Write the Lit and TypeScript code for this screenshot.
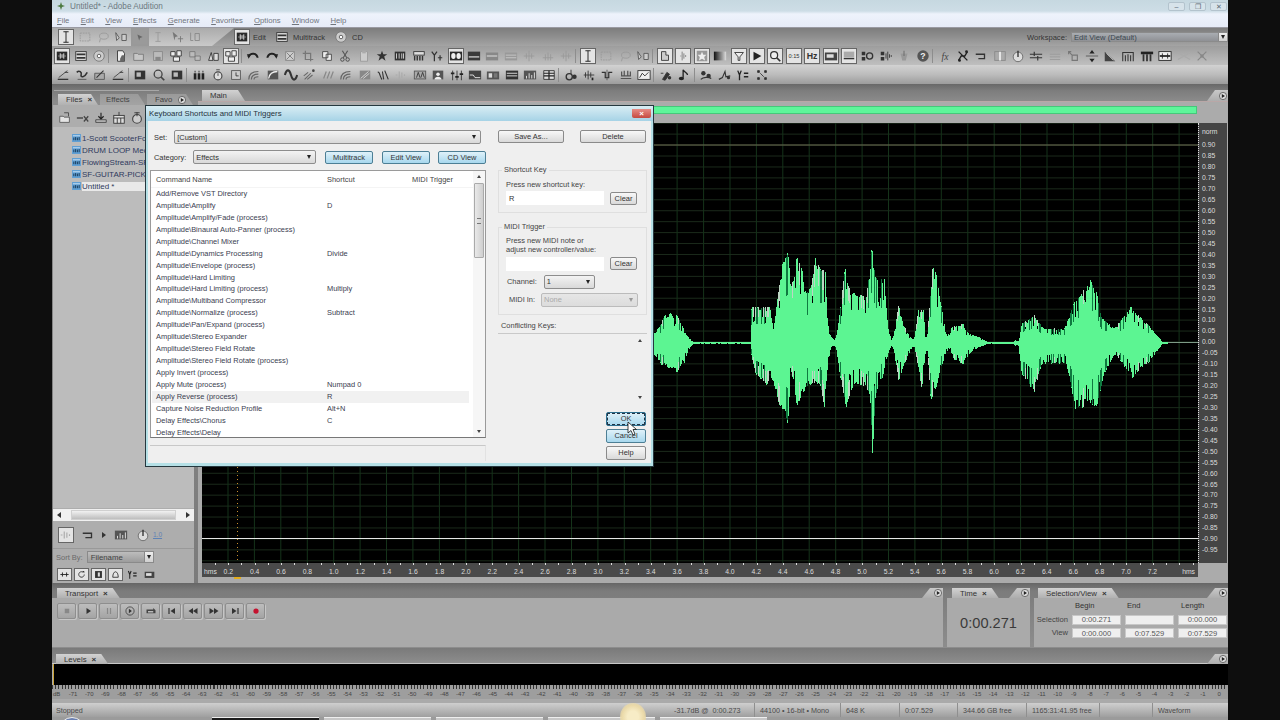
import { LitElement, html, css, svg, TemplateResult } from "lit";
import { customElement } from "lit/decorators.js";

/* ---------- toolbar glyphs ---------- */
const G: Record<string, TemplateResult> = {
  wave: svg`<rect x="2" y="3" width="12" height="10" fill="#2a2a2a"/><path d="M4 8h1M6 5v6M8 6v4M10 5v6M12 8h-1" stroke="#fff"/>`,
  mt: svg`<rect x="2" y="3" width="12" height="10" fill="#ddd" stroke="#333"/><path d="M3 6h10M3 10h10" stroke="#333" stroke-width="2"/>`,
  cd: svg`<circle cx="8" cy="8" r="6" fill="#ccc" stroke="#777"/><circle cx="8" cy="8" r="2" fill="#fff" stroke="#555"/>`,
  doc: svg`<path d="M4 2h6l2 3v9H4z" fill="#eee" stroke="#333"/><path d="M9 7h3v7H7v-3" fill="#666"/>`,
  folder: svg`<path d="M2 13V5h4l1 1h6v7z" fill="#c6c6c6" stroke="#777"/>`,
  save: svg`<rect x="3" y="3" width="10" height="10" fill="#bbb" stroke="#888"/><rect x="5" y="9" width="6" height="4" fill="#888"/>`,
  docs: svg`<path d="M2 3h5v5H2zM9 2h5v6H9zM5 9h7v5H5z" fill="#eee" stroke="#333"/>`,
  docsd: svg`<path d="M2 3h6v6H2zM8 8h6v5H8z" fill="#bbb" stroke="#777"/>`,
  film: svg`<path d="M3 13l3-9 2 9zM9 5h5v8H9z" fill="#ddd" stroke="#333"/>`,
  undo: svg`<path d="M3 9a5 4 0 0 1 10 1" fill="none" stroke="#222" stroke-width="2.4"/><path d="M1 6l5 0-3 5z" fill="#222"/>`,
  redo: svg`<path d="M3 10a5 4 0 0 1 10-1" fill="none" stroke="#222" stroke-width="2.4"/><path d="M15 6h-5l3 5z" fill="#222"/>`,
  xgrid: svg`<rect x="3" y="3" width="10" height="10" fill="#ccc" stroke="#888"/><path d="M4 4l8 8M12 4l-8 8" stroke="#777"/>`,
  crop: svg`<path d="M5 2v10h9M2 5h9v9" fill="none" stroke="#777" stroke-width="1.4"/>`,
  copy: svg`<path d="M3 3h6v7H3zM7 6h6v7H7z" fill="#eee" stroke="#444"/>`,
  cut: svg`<path d="M5 2l5 8M11 2L6 10" stroke="#555" stroke-width="1.3"/><circle cx="5" cy="12" r="2" fill="none" stroke="#444"/><circle cx="11" cy="12" r="2" fill="none" stroke="#444"/>`,
  paste: svg`<path d="M4 3h8v11H4z" fill="#ccc" stroke="#999"/><rect x="6" y="2" width="4" height="3" fill="#aaa"/>`,
  star: svg`<path d="M8 2l1.500 4H14l-3.500 2.500 1.500 5L8 10.500 4 13.500l1.500-5L2 6h4.500z" fill="#333"/>`,
  fil: svg`<rect x="2" y="3" width="12" height="10" fill="#333"/><path d="M4 5v6M7 5v6M10 5v6M12 5v6" stroke="#ddd"/>`,
  fil2: svg`<rect x="2" y="3" width="12" height="4" fill="#ddd" stroke="#333"/><path d="M3 13V8M6 13V8M9 13V8M12 13V8" stroke="#333" stroke-width="1.600"/>`,
  yplus: svg`<path d="M2 3l3 4 3-4M5 7v7" fill="none" stroke="#333" stroke-width="1.400"/><path d="M9 10h5M11.500 7v6" stroke="#333" stroke-width="1.400"/>`,
  pair: svg`<rect x="1" y="3" width="14" height="10" fill="#2a2a2a"/><ellipse cx="5" cy="8" rx="2.500" ry="3.500" fill="#eee"/><ellipse cx="11" cy="8" rx="2.500" ry="3.500" fill="#eee"/>`,
  band: svg`<rect x="1" y="3" width="14" height="10" fill="#3a3a3a"/><path d="M2 9h12" stroke="#aaa" stroke-width="2"/>`,
  bandd: svg`<rect x="1" y="4" width="14" height="9" fill="#888"/><path d="M2 8h12" stroke="#bbb" stroke-width="2"/>`,
  bandm: svg`<rect x="1" y="4" width="14" height="9" fill="#999"/><path d="M2 7h12M2 10h12" stroke="#ccc"/>`,
  cross: svg`<path d="M8 2v12M2 8h12M5 5v6M11 5v6" stroke="#999"/>`,
  crossd: svg`<path d="M2 10h12M5 6v7M8 4v9M11 6v7" stroke="#999"/>`,
  ibeam: svg`<path d="M5 2h6M5 14h6M8 2v12" stroke="#222" stroke-width="1.100" fill="none"/>`,
  ibeamd: svg`<path d="M5 3h6M5 13h6M8 3v10" stroke="#999" fill="none"/>`,
  marq: svg`<rect x="2.500" y="3.500" width="11" height="9" fill="none" stroke="#999" stroke-dasharray="2 1"/>`,
  lasso: svg`<ellipse cx="9" cy="7" rx="5" ry="3.500" fill="none" stroke="#999"/><path d="M5 10l-1 4" stroke="#999"/>`,
  hyb: svg`<path d="M2 3l4 6-3 3zM9 5h5v7H9z" fill="#ccc" stroke="#555"/>`,
  pressed: svg`<path d="M5 5l6 3-3 1-1 3z" fill="#666"/>`,
  arrow: svg`<path d="M3 2l6 5-3 1-1 4z" fill="#777"/><path d="M9 10h6M12 7v7" stroke="#777"/>`,
  dimtext: svg`<path d="M3 3v9h3M8 4h5v8H8z" fill="none" stroke="#888"/>`,
  docf: svg`<path d="M4 3h5v4h3v6H4z" fill="#ccc" stroke="#333"/>`,
  wavf: svg`<path d="M5 8h1M7 3v10M9 5v6M11 7v2" stroke="#777"/>`,
  starf: svg`<rect x="2" y="2" width="12" height="12" fill="#999"/><path d="M8 3l1.500 3.500H13L10.500 9l1 4L8 11l-3.500 2 1-4L3 6.500h3.500z" fill="#eee"/>`,
  grad: svg`<defs><linearGradient id="gr"><stop offset="0" stop-color="#111"/><stop offset="1" stop-color="#ddd"/></linearGradient></defs><rect x="1" y="3" width="14" height="10" fill="url(#gr)"/>`,
  funnel: svg`<path d="M3 4h10L9 9v4H7V9z" fill="#eee" stroke="#333"/>`,
  play: svg`<path d="M4 3l9 5-9 5z" fill="#222"/>`,
  zoom: svg`<circle cx="7" cy="7" r="4" fill="#eee" stroke="#333" stroke-width="1.400"/><path d="M10 10l4 4" stroke="#333" stroke-width="2"/>`,
  t015: svg`<text x="8" y="10.500" text-anchor="middle" font-size="6.500" font-family="Liberation Sans" fill="#333">0:15</text>`,
  hz: svg`<text x="8" y="11.500" text-anchor="middle" font-size="10" font-weight="700" font-family="Liberation Sans" fill="#333">Hz</text>`,
  bar: svg`<rect x="1" y="4" width="14" height="9" fill="#444"/><rect x="3" y="6" width="8" height="4" fill="#ddd"/>`,
  linef: svg`<path d="M2 11h12" stroke="#333" stroke-width="1.500"/><rect x="2" y="3" width="12" height="7" fill="#aaa"/>`,
  dots: svg`<path d="M2 3h4v4H2zM2 9h4v4H2z" fill="#333"/><circle cx="11" cy="8" r="3.500" fill="none" stroke="#333" stroke-width="1.500"/>`,
  dots2: svg`<path d="M2 3h4v4H2zM2 9h4v4H2z" fill="#333"/><path d="M8 5v6M10 3v10M12 6v4M14 7v2" stroke="#333"/>`,
  chk: svg`<path d="M4 5h8l-2 8H6z" fill="#999"/><path d="M8 2v6" stroke="#666"/>`,
  help: svg`<circle cx="8" cy="8" r="6.500" fill="#555"/><text x="8" y="11.500" text-anchor="middle" font-size="10" font-weight="700" font-family="Liberation Sans" fill="#eee">?</text>`,
  fx: svg`<text x="8" y="12" text-anchor="middle" font-size="11" font-style="italic" font-family="Liberation Serif" fill="#444">fx</text>`,
  node: svg`<path d="M3 13l3-5h4l3-5M3 3l10 10" fill="none" stroke="#222" stroke-width="1.600"/><circle cx="4" cy="13" r="1.600" fill="#222"/><circle cx="12" cy="3" r="1.600" fill="#222"/>`,
  ret: svg`<path d="M2 6h10v5H5" fill="none" stroke="#333" stroke-width="1.500"/>`,
  split: svg`<rect x="2" y="3" width="12" height="10" fill="#aaa" stroke="#888"/><path d="M8 3v10" stroke="#eee" stroke-width="2"/>`,
  clock: svg`<circle cx="8" cy="9" r="5.500" fill="#ddd" stroke="#666"/><path d="M8 2v7" stroke="#222" stroke-width="1.400"/>`,
  lines: svg`<path d="M1 6h14M1 10h14M6 3v5M10 8v5" stroke="#333" stroke-width="1.300"/>`,
  linesd: svg`<path d="M2 6l12 0M2 9h12M2 12h12" stroke="#999"/>`,
  crop2: svg`<path d="M3 3l4 4M6 3H3v3M7 7h6v6H7z" fill="none" stroke="#777" stroke-width="1.300"/>`,
  ud: svg`<path d="M8 1l3 4H5zM8 15l-3-4h6z" fill="#222"/><path d="M1 8h14" stroke="#555"/>`,
  ramp: svg`<path d="M2 14V3l12 11z" fill="#444"/><path d="M4 5l8 8" stroke="#ccc"/>`,
  arch: svg`<path d="M2 14V4h12v10M5 14V7M8 14V6M11 14V7" fill="none" stroke="#333" stroke-width="1.200"/>`,
  hat: svg`<rect x="1" y="3" width="14" height="3" fill="#222"/><path d="M4 6v8M8 6v8M12 6v8" stroke="#333" stroke-width="2"/>`,
  blk: svg`<rect x="1" y="3" width="14" height="10" fill="#eee" stroke="#222"/><path d="M2 8h12" stroke="#222" stroke-width="2"/><path d="M5 5v6M11 5v6" stroke="#222"/>`,
  xd: svg`<path d="M1 4l14 8M1 12l14-8" stroke="#aaa" stroke-width="1.600"/>`,
  xd2: svg`<path d="M3 3l10 10M13 3L3 13" stroke="#888" stroke-width="1.400"/><circle cx="8" cy="8" r="2" fill="#888"/>`,
  fade1: svg`<path d="M2 13h12" stroke="#333" stroke-width="1.500"/><path d="M3 11l10-8" stroke="#444"/><path d="M10 5h4" stroke="#333"/>`,
  fade2: svg`<path d="M2 5c3-3 6 0 5 3s4 3 7-3" fill="none" stroke="#333" stroke-width="1.800"/><path d="M3 13h10" stroke="#555"/>`,
  fade3: svg`<path d="M2 13h11V6H2z" fill="#aaa" stroke="#555"/><path d="M4 11l8-8" stroke="#333" stroke-width="1.300"/>`,
  scr: svg`<rect x="2" y="3" width="12" height="10" fill="#333"/><rect x="4" y="5" width="5" height="5" fill="#bbb"/>`,
  zoomd: svg`<circle cx="7" cy="7" r="4.500" fill="none" stroke="#444" stroke-width="1.500"/><path d="M10 10l4 4" stroke="#444" stroke-width="2"/>`,
  binoc: svg`<path d="M2 6h3v7H2zM6.500 6h3v7h-3zM11 6h3v7h-3z" fill="#222"/><path d="M3 4h1M7.500 4h1M12 4h1" stroke="#222" stroke-width="2"/>`,
  stop: svg`<circle cx="8" cy="9" r="4.500" fill="#ddd" stroke="#444" stroke-width="1.300"/><path d="M8 9V6M6 2h4" stroke="#444"/>`,
  stop2: svg`<rect x="3" y="3" width="10" height="10" fill="#ccc" stroke="#555"/><path d="M8 5v4h3" stroke="#333" fill="none"/>`,
  sig: svg`<path d="M2 13c0-6 4-9 11-9M5 13c0-4 2-6 8-6M8 13c0-2 1-3 5-3" fill="none" stroke="#666" stroke-width="1.300"/>`,
  sigb: svg`<rect x="2" y="3" width="12" height="10" fill="#555"/><path d="M3 12c1-6 4-8 10-8" stroke="#eee" stroke-width="1.500" fill="none"/>`,
  sine: svg`<path d="M1 8c2-7 5-7 7 0s5 7 7 0" fill="none" stroke="#333" stroke-width="2.400"/>`,
  spray: svg`<path d="M3 13l7-7M6 13l6-5M2 9l5-4" stroke="#666" stroke-width="1.200"/><circle cx="13" cy="3" r="1.500" fill="#444"/>`,
  hatch: svg`<path d="M3 12l3-8M7 12l3-8M11 12l3-8" stroke="#888" stroke-width="1.400"/>`,
  grid: svg`<rect x="2" y="3" width="12" height="10" fill="#888"/><path d="M3 12l9-8M6 12l7-6" stroke="#ddd"/>`,
  tilt: svg`<path d="M2 5c2-2 3 7 5 8M7 4c1 0 1 8 2 9M10 3l4 10" fill="none" stroke="#333" stroke-width="1.300"/>`,
  hsym: svg`<path d="M2 8h2M6 4v8M9 5v6M12 7v2" stroke="#aaa" stroke-width="1.300"/>`,
  aa: svg`<rect x="1.500" y="3.500" width="13" height="9" fill="#aaa" stroke="#555"/><path d="M4 11l2-6 2 6M9 11l2-6 2 6" fill="none" stroke="#333"/>`,
  ppl: svg`<rect x="2" y="3" width="12" height="10" fill="#555"/><circle cx="8" cy="7" r="2" fill="#eee"/><path d="M4 13c0-4 8-4 8 0" fill="#eee"/>`,
  mix: svg`<path d="M3 3v11M8 3v11M13 3v11" stroke="#333"/><path d="M1 6h4M6 10h4M11 7h4" stroke="#222" stroke-width="2"/>`,
  flow: svg`<rect x="1" y="3" width="14" height="10" fill="#444"/><path d="M2 8h4l2 3h6" stroke="#eee" fill="none"/>`,
  film2: svg`<rect x="1" y="4" width="14" height="9" fill="#555"/><rect x="3" y="6" width="4" height="5" fill="#ddd"/><rect x="9" y="6" width="4" height="5" fill="#777"/>`,
  tbl: svg`<rect x="1" y="3" width="14" height="10" fill="#333"/><path d="M2 6h12M2 9h12" stroke="#eee"/>`,
  tbl2: svg`<rect x="1" y="3" width="14" height="10" fill="#555"/><path d="M4 12V9M7 12V6M10 12V8M13 12V5" stroke="#eee"/>`,
  tbl3: svg`<path d="M2 3h12v10H2z" fill="#ddd" stroke="#333"/><path d="M2 6h12M2 9h12M8 3v10" stroke="#222" stroke-width="1.400"/>`,
  chain: svg`<circle cx="6" cy="10" r="3.500" fill="none" stroke="#333" stroke-width="1.500"/><circle cx="12" cy="10" r="2.500" fill="#333"/><path d="M8 2v5" stroke="#333"/>`,
  hmark: svg`<path d="M2 8h12M4 5v6M7 3v10M10 5v6" stroke="#333"/><path d="M12 11v3" stroke="#222" stroke-width="2"/>`,
  step: svg`<path d="M2 5h4v6h4V5h4" fill="none" stroke="#333" stroke-width="1.400"/><path d="M8 2v12" stroke="#555"/>`,
  ridge: svg`<path d="M3 4v5h10V4M6 3v6M10 3v6M2 12h12" fill="none" stroke="#555" stroke-width="1.400"/>`,
  box2: svg`<rect x="1" y="3" width="14" height="10" fill="#eee" stroke="#333"/><path d="M3 11l3-5 3 3 4-4" stroke="#222" fill="none"/>`,
  mic: svg`<path d="M4 13l5-8 3 2-5 7zM2 6h3" fill="#333" stroke="#333"/><circle cx="12" cy="11" r="2" fill="#333"/>`,
  note: svg`<path d="M7 2c1 3 5 3 5 6M7 2v9" fill="none" stroke="#222" stroke-width="1.500"/><ellipse cx="5" cy="12" rx="3" ry="2" fill="#222"/>`,
  group: svg`<circle cx="5" cy="6" r="2.500" fill="#333"/><circle cx="11" cy="9" r="2.500" fill="#333"/><path d="M2 13c3-3 9-3 12-1" stroke="#333" fill="none" stroke-width="1.400"/>`,
  peak: svg`<path d="M1 13l4-2 3-7 1 6 5-1" fill="none" stroke="#333" stroke-width="1.300"/><circle cx="12" cy="11" r="1.800" fill="#333"/>`,
  yeq: svg`<path d="M2 3l2 5 2-5M4 8v6M9 6h5M9 10h5" fill="none" stroke="#222" stroke-width="1.500"/>`,
  nodes: svg`<path d="M3 3h2v2H3zM11 3h2v2h-2zM3 11h2v2H3zM11 11h2v2h-2zM6 6l4 4" fill="#333" stroke="#333"/>`,
  ldoc: svg`<path d="M2 13V6h4l1 1h6v6z" fill="#e4e4e4" stroke="#555"/><path d="M7 2h5v4" fill="none" stroke="#444"/>`,
  lx: svg`<path d="M1 8h7" stroke="#333" stroke-width="1.400"/><path d="M9 6l5 6M14 6l-5 6" stroke="#444" stroke-width="1.400"/>`,
  lins: svg`<path d="M2 13h12v-3H2z" fill="#bbb" stroke="#444"/><path d="M8 2v7M5 6l3 3 3-3" fill="none" stroke="#222" stroke-width="1.300"/>`,
  lcal: svg`<rect x="2" y="5" width="12" height="9" fill="#ddd" stroke="#333"/><path d="M2 8h12M6 8v6M10 8v6M8 1v4" stroke="#333"/>`,
  lclk: svg`<circle cx="8" cy="9" r="5" fill="#ccc" stroke="#444" stroke-width="1.300"/><path d="M8 1v5M5 2h6" stroke="#444" stroke-width="1.300"/>`,
};

const R2 = ["wave!","mt","cd","|","doc","folder","save","docs","docsd","film","docs!","|","undo","redo","xgrid","crop","copy","cut","paste","star","fil","fil2","yplus","pair!","band","bandd","bandm","cross","crossd","cross","|","ibeam!","marq","lasso","hyb","|","docf!","wavf!","starf!","grad","funnel!","play!","zoom!","t015!","hz!","bar!","linef!","dots","dots2","chk","help","|","fx","node","ret","split","clock","lines","linesd","crop2","ud","ramp","arch","hat","blk","xd","xd2"];
const R3 = ["fade1","fade2","fade3","fade1","|","scr","zoomd","scr","|","binoc","stop","stop2","sig","sigb","sine","spray","hatch","sig","grid","tilt","hsym","aa","ppl","mix","flow","film2","tbl","tbl2","tbl3","|","chain","hmark","step","ridge","box2","|","mic","note","|","group","peak","yeq","nodes"];
const R1 = ["ibeam!","marq","lasso","hyb","pressed*","ibeamd","arrow","dimtext"];

const ico = (name: string) => {
  if (name === "|") return html`<i class="sep"></i>`;
  const framed = name.endsWith("!");
  const down = name.endsWith("*");
  const key = name.replace(/[!*]$/, "");
  return html`<span class="ic ${framed ? "framed" : ""} ${down ? "down" : ""}"><svg viewBox="0 0 16 16">${G[key]}</svg></span>`;
};

/* ---------- waveform ---------- */
const TOP: number[][] = [[-20,300],[10,310],[25,290],[40,255],[55,250],[75,255],[90,290],[105,320],[120,337],[280,337],[283,230],[300,232],[335,232],[345,300],[355,210],[370,100],[385,65],[395,170],[410,80],[425,120],[435,190],[450,170],[462,85],[475,115],[490,125],[495,260],[505,320],[515,330],[520,320],[530,250],[545,110],[555,170],[570,190],[590,195],[605,200],[620,48],[630,140],[655,145],[665,290],[675,330],[680,320],[695,225],[705,270],[720,310],[735,330],[740,320],[750,240],[765,240],[770,320],[775,320],[790,110],[800,130],[815,230],[830,320],[845,290],[875,280],[890,310],[920,320],[945,337],[1015,337],[1022,330],[1030,335],[1040,280],[1075,255],[1100,295],[1160,295],[1185,220],[1232,150],[1250,190],[1262,260],[1300,295],[1345,230],[1395,285],[1435,337],[1600,337]];
const BOT: number[][] = [[-20,365],[10,370],[30,400],[50,410],[75,425],[95,395],[110,350],[120,338],[280,338],[283,375],[295,430],[325,462],[340,440],[360,520],[385,578],[395,420],[410,525],[430,480],[450,460],[475,460],[487,530],[495,420],[505,350],[515,345],[520,350],[530,430],[548,530],[565,470],[590,460],[615,490],[622,675],[630,500],[650,440],[665,370],[675,345],[680,350],[695,450],[715,390],[735,345],[740,350],[760,475],[770,370],[775,350],[785,510],[800,470],[820,390],[835,350],[850,385],[875,400],[900,360],[945,338],[1015,338],[1022,345],[1030,340],[1040,430],[1075,485],[1095,400],[1165,400],[1190,535],[1250,525],[1275,420],[1300,370],[1350,440],[1395,395],[1435,338],[1600,338]];

const lerp = (list: number[][], v: number) => {
  for (let i = 1; i < list.length; i++) {
    if (v <= list[i][0]) {
      const [a, b] = [list[i - 1], list[i]];
      return a[1] + ((b[1] - a[1]) * (v - a[0])) / (b[0] - a[0] || 1);
    }
  }
  return 337;
};
const nearVertex = (list: number[][], v: number) => list.some((p) => Math.abs(p[0] - v) < 2.6);

let seed = 7;
const rnd = () => {
  seed = (seed * 16807) % 2147483647;
  return seed / 2147483647;
};

const CY = 219;
let wavePath = "";
let lightPath = "";
let darkPath = "";
for (let x = 448; x <= 965; x++) {
  const v = (x + 202 - 650) * 2.8;
  const t = 230 + lerp(TOP, v) / 3 - 123;
  const b = 230 + lerp(BOT, v) / 3 - 123;
  const h1 = CY - t;
  const h2 = b - CY;
  const jag = () => (rnd() < 0.25 ? 0.55 + rnd() * 0.25 : 0.86 + rnd() * 0.14);
  const f1 = nearVertex(TOP, v) ? 1 : jag();
  const f2 = nearVertex(BOT, v) ? 1 : jag();
  wavePath += `M${x + 0.5} ${(CY - h1 * f1).toFixed(1)}V${(CY + h2 * f2 + 1).toFixed(1)}`;
  if (h1 + h2 > 30) {
    const r = rnd();
    if (r < 0.1) lightPath += `M${x + 0.5} ${t.toFixed(1)}v${(h1 * 0.28).toFixed(1)}M${x + 0.5} ${b.toFixed(1)}v${(-h2 * 0.3).toFixed(1)}`;
    else if (r < 0.24) darkPath += `M${x + 0.5} ${(CY - h1 * 0.98).toFixed(1)}v${(h1 * 0.45).toFixed(1)}M${x + 0.5} ${(CY + h2 * 0.98).toFixed(1)}v${(-h2 * 0.4).toFixed(1)}`;
  }
}

let gridPath = "";
for (let i = 0; i < 38; i++) gridPath += `M${(26 + i * 26.42).toFixed(1)} 0V440`;
let hgrid = "";
for (let k = -20; k <= 20; k++) hgrid += `M0 ${CY + k * 10.94}H996`;

const TIME_LABELS: string[] = [];
for (let i = 1; i <= 36; i++) TIME_LABELS.push((i * 0.2).toFixed(1));
const SCALE: string[] = [];
for (let i = 18; i >= -19; i--) SCALE.push((i * 0.05).toFixed(2));
const DB: string[] = [];
for (let i = 71; i >= 1; i--) DB.push("-" + i);
DB.push("0");

const COMMANDS: [string, string][] = [
  ["Add/Remove VST Directory", ""],
  ["Amplitude\\Amplify", "D"],
  ["Amplitude\\Amplify/Fade (process)", ""],
  ["Amplitude\\Binaural Auto-Panner (process)", ""],
  ["Amplitude\\Channel Mixer", ""],
  ["Amplitude\\Dynamics Processing", "Divide"],
  ["Amplitude\\Envelope (process)", ""],
  ["Amplitude\\Hard Limiting", ""],
  ["Amplitude\\Hard Limiting (process)", "Multiply"],
  ["Amplitude\\Multiband Compressor", ""],
  ["Amplitude\\Normalize (process)", "Subtract"],
  ["Amplitude\\Pan/Expand (process)", ""],
  ["Amplitude\\Stereo Expander", ""],
  ["Amplitude\\Stereo Field Rotate", ""],
  ["Amplitude\\Stereo Field Rotate (process)", ""],
  ["Apply Invert (process)", ""],
  ["Apply Mute (process)", "Numpad 0"],
  ["Apply Reverse (process)", "R"],
  ["Capture Noise Reduction Profile", "Alt+N"],
  ["Delay Effects\\Chorus", "C"],
  ["Delay Effects\\Delay", ""],
];

const menuBtn = html`<svg class="mbtn" viewBox="0 0 10 10"><circle cx="5" cy="5" r="4.500" fill="#ddd" stroke="#555"/><path d="M3.500 2.500l4 2.500-4 2.500z" fill="#222"/></svg>`;
const fileIco = html`<svg class="fico" viewBox="0 0 10 9"><rect width="10" height="9" fill="#5f9fd4"/><path d="M1 2h8" stroke="#cfe3f4"/><path d="M2 7V4M4 7V3.500M6 7V4M8 7V3.500" stroke="#12324f"/></svg>`;
const tIcons = [
  svg`<rect x="5" y="5" width="6" height="6" fill="#888"/>`,
  svg`<path d="M6 4l6 4-6 4z" fill="#333"/>`,
  svg`<path d="M6 4v8M10 4v8" stroke="#888" stroke-width="1.600"/>`,
  svg`<circle cx="8" cy="8" r="5.500" fill="none" stroke="#333"/><path d="M6.500 5l4 3-4 3z" fill="#333"/>`,
  svg`<path d="M2 6h9v-2l3 3v4H2z" fill="#444"/><rect x="4" y="8" width="7" height="2" fill="#bbb"/>`,
  svg`<path d="M4 4v8" stroke="#333" stroke-width="1.600"/><path d="M12 4L6 8l6 4z" fill="#333"/>`,
  svg`<path d="M8 4L2 8l6 4zM14 4L8 8l6 4z" fill="#333"/>`,
  svg`<path d="M2 4l6 4-6 4zM8 4l6 4-6 4z" fill="#333"/>`,
  svg`<path d="M12 4v8" stroke="#333" stroke-width="1.600"/><path d="M4 4l6 4-6 4z" fill="#333"/>`,
  svg`<circle cx="8" cy="8" r="3.500" fill="#c4122f"/>`,
];
const bottomIcons = [
  svg`<path d="M2 8h12M5 5v6M11 5v6" stroke="#222" stroke-width="1.300"/>`,
  svg`<path d="M12 8a4 4 0 1 1-2-3.500" fill="none" stroke="#333" stroke-width="1.300"/><path d="M9 3h3v3" fill="#333"/>`,
  svg`<rect x="3" y="3" width="10" height="10" fill="#333"/><rect x="7" y="5" width="3" height="6" fill="#ddd"/>`,
  svg`<path d="M4 12c0-5 2-8 4-8s4 3 4 8M4 12h8" fill="none" stroke="#333" stroke-width="1.300"/>`,
];

@customElement("app-root")
export class AppRoot extends LitElement {
  static styles = css`
    :host { display: block; width: 1280px; height: 720px; background: #0e0e0e; overflow: hidden; font-family: "Liberation Sans", Arial, sans-serif; font-size: 7.450px; color: #333; }
    .win { position: relative; margin-left: 52px; width: 1176px; height: 720px; display: flex; flex-direction: column; background: #8a8a8a; filter: blur(0.3px); }
    svg { display: block; }
    /* title */
    .title { height: 27px; border-bottom: 1px solid #9a9aa2; background: linear-gradient(#c6d8e0 0, #cddde6 11px, #eef3fc 14px, #e6ebf7 100%); flex: none; position: relative; }
    .t-line { height: 12px; display: flex; align-items: center; gap: 5px; padding-left: 5px; color: #6c7880; font-size: 8.200px; }
    .t-line svg { width: 8px; height: 8px; }
    .ctrls { margin-left: auto; display: flex; gap: 4px; margin-right: 1px; }
    .ctrls b { width: 17px; height: 9px; border: 1px solid #b3c3cd; border-radius: 2px; background: #d7e3ea; display: flex; align-items: center; justify-content: center; font-weight: 400; font-size: 7px; line-height: 7px; color: #5b6a73; box-sizing: border-box; }
    .menu { display: flex; gap: 11.300px; padding: 4px 0 0 5px; color: #70757d; font-size: 7.700px; }
    .menu span::first-letter { text-decoration: underline; }
    /* toolbars */
    .tb { flex: none; display: flex; align-items: center; }
    .tb1 { height: 18px; background: linear-gradient(#7d7d7d, #8f8f8f 50%, #a4a4a4); }
    .tools { width: 182px; height: 18px; display: flex; align-items: center; padding-left: 5px; box-sizing: border-box; clip-path: polygon(0 0, 100% 0, calc(100% - 22px) 100%, 0 100%); background: linear-gradient(#ababab, #c9c9c9); }
    .modes { display: flex; align-items: center; margin-left: 0; color: #333; font-size: 7.500px; }
    .modes .ic { width: 16px; }
    .modes span.lbl { margin: 0 8px 0 3px; }
    .ws { margin-left: auto; display: flex; align-items: center; gap: 4px; font-size: 7.600px; color: #333; }
    .wscombo { width: 157px; height: 10px; box-sizing: border-box; display: flex; align-items: center; justify-content: space-between; border: 1px solid #8b8b8b; background: linear-gradient(#a9adb2, #8f9195); color: #3b4750; padding: 0 0 0 2px; }
    .tb2 { height: 19px; padding-left: 1px; background: linear-gradient(#9d9d9d, #bfbfbf); }
    .tb3 { height: 19px; padding-left: 2px; background: linear-gradient(#d2d2d2, #bcbcbc 50%, #9c9c9c); }
    .ic { width: 18.400px; height: 16px; display: flex; align-items: center; justify-content: center; flex: none; box-sizing: border-box; }
    .ic svg { width: 14px; height: 14px; }
    .framed svg { background: #e4e4e4; outline: 1px solid #666; outline-offset: 0; }
    .down svg { background: #9a9a9a; outline: 2px solid #999; }
    .sep { width: 3.600px; height: 14px; flex: none; border-left: 1px solid #8d8d8d; box-sizing: border-box; }
    .band { height: 6px; flex: none; background: linear-gradient(#686868, #7a7a7a); }
    /* panels */
    .panels { height: 493px; flex: none; display: flex; gap: 4px; background: linear-gradient(#7c7c7c, #8c8c8c 12px, #7b7b7b); }
    .left { width: 142px; display: flex; flex-direction: column; }
    .tabs { display: flex; flex: none; }
    .ltabs { padding: 4px 0 0 6px; height: 15px; box-sizing: border-box; gap: 2px; position: relative; }
    .ltabs::before { content: ""; position: absolute; left: 2px; top: 0; width: 105px; height: 1px; background: #a7a7a7; }
    .tab { height: 11px; display: flex; align-items: center; gap: 5px; padding: 0 12px 0 8px; clip-path: polygon(0 0, calc(100% - 7px) 0, 100% 100%, 0 100%); background: linear-gradient(#d2d2d2, #b1b1b1); font-size: 7.800px; color: #333; box-sizing: border-box; flex: none; }
    .tab.off { background: linear-gradient(#9a9a9a, #a3a3a3); color: #444; }
    .tab b { font-size: 8px; font-weight: 700; }
    .tab .mbtn { margin-left: 1px; }
    .t-files { width: 40px; }
    .t-eff { width: 45px; padding-left: 6px; }
    .t-fav { width: 46px; }
    .t-main { width: 43px; }
    .lbody { flex: 1; background: #adadad; display: flex; flex-direction: column; margin-left: 1px; }
    .mbtn { width: 8px; height: 8px; flex: none; }
    .ltool { height: 22px; display: flex; align-items: center; gap: 3px; padding: 4px 0 0 4px; box-sizing: border-box; flex: none; }
    .ltool .ic { width: 15px; }
    .list { flex: 1; background: #bcbcbc; padding: 5px 0 0 19px; overflow: hidden; }
    .file { height: 12px; display: flex; align-items: center; gap: 1px; white-space: nowrap; font-size: 8px; color: #2f3a5c; }
    .fico { width: 9px; height: 8px; flex: none; }
    .file.cur span { background: #e9e9e9; padding-right: 40px; }
    .hscroll { height: 12px; flex: none; background: #f0f0f0; display: flex; align-items: center; justify-content: space-between; padding: 0 4px; margin-top: 1px; box-sizing: border-box; }
    .hthumb { width: 105px; height: 10px; background: linear-gradient(#f1f1f1, #bdbdbd); border: 1px solid #d0d0d0; box-sizing: border-box; }
    .tri-l, .tri-r { width: 0; height: 0; border-top: 3px solid transparent; border-bottom: 3px solid transparent; }
    .tri-l { border-right: 4px solid #333; }
    .tri-r { border-left: 4px solid #333; }
    .lrow { height: 28px; flex: none; display: flex; align-items: center; gap: 7px; padding-left: 5px; border-bottom: 1px solid #999; box-sizing: border-box; }
    .lrow .ic { width: 15px; }
    .lrow u { color: #5f82b5; font-size: 6.500px; margin-left: -4px; }
    .sort { height: 19px; flex: none; display: flex; align-items: center; gap: 4px; padding: 0 0 3px 3px; box-sizing: border-box; color: #6b6b6b; font-size: 7.500px; }
    .sortc { width: 67px; height: 12px; display: flex; align-items: center; justify-content: space-between; border: 1px solid #8a8a8a; background: linear-gradient(#bdbdbd, #9c9c9c); box-sizing: border-box; padding-left: 3px; color: #444; font-size: 7.800px; }
    .sortc i, .combo i, .wscombo i { width: 9px; height: 100%; background: linear-gradient(#eee, #cfcfcf); display: flex; align-items: center; justify-content: center; border-left: 1px solid #888; box-sizing: border-box; }
    .sortc i::after, .combo i::after, .wscombo i::after { content: ""; border-left: 2.500px solid transparent; border-right: 2.500px solid transparent; border-top: 4px solid #222; }
    .lfoot { height: 15px; flex: none; display: flex; gap: 3px; padding-left: 4px; align-items: flex-start; }
    .lfoot .ic { width: 14px; height: 12px; }
    .lfoot .ic svg { width: 13px; height: 11px; }
    .main { width: 1030px; display: flex; flex-direction: column; }
    .mtabs { height: 11px; flex: none; display: flex; justify-content: space-between; padding-left: 4px; box-sizing: border-box; }
    .corner { width: 21px; height: 11px; display: flex; align-items: center; justify-content: flex-end; padding-right: 1px; box-sizing: border-box; clip-path: polygon(8px 0, 100% 0, 100% 100%, 0 100%); background: linear-gradient(#c9c9c9, #adadad); flex: none; }
    .mbody { flex: 1; display: flex; flex-direction: column; background: #ababab; border-top: 1px solid #b9a7a7; padding-left: 4px; }
    .overview { height: 8px; width: 995px; margin: 4px 0 9px; flex: none; background: #5ef59a; border: 1px solid #45c87a; box-sizing: border-box; }
    .wrow { display: flex; height: 440px; flex: none; }
    .wave { width: 996px; height: 440px; background: #000; flex: none; }
    .scale { width: 29px; margin-left: 0; background: #454545; color: #ddd; font-size: 6.800px; border-left: 1px dotted #ddd; box-sizing: border-box; display: flex; flex-direction: column; padding-left: 3px; overflow: hidden; }
    .scale .norm { height: 16.500px; flex: none; display: flex; align-items: center; }
    .scale span { height: 10.940px; flex: none; display: flex; align-items: center; white-space: nowrap; }
    .tl { width: 996px; height: 14px; flex: none; background-color: #4a4a4a; display: flex; align-items: center; color: #ddd; font-size: 6.800px; background-image: repeating-linear-gradient(90deg, #ddd 0 1px, transparent 1px 13.210px); background-size: 100% 2px; background-repeat: no-repeat; background-position: 13px 0; padding-top: 2px; box-sizing: border-box; }
    .tl .h0 { width: 13px; flex: none; padding-left: 2px; white-space: nowrap; box-sizing: border-box; }
    .tl .c { width: 26.420px; flex: none; text-align: center; }
    .tl .h1 { margin-left: auto; padding-right: 3px; }
    .marker { width: 7px; height: 2px; background: #e5ae1c; margin-left: 32px; flex: none; }
    /* bottom */
    .bottom { height: 65px; flex: none; display: flex; gap: 4px; background: linear-gradient(#666, #7c7c7c 8px, #8d8d8d); }
    .pane { display: flex; flex-direction: column; padding-top: 5px; box-sizing: border-box; }
    .ptabs { height: 10px; flex: none; display: flex; justify-content: space-between; }
    .ptabs .tab { height: 10px; }
    .ptabs .corner { height: 10px; }
    .pbody { height: 49px; flex: none; background: #aaaaaa; box-sizing: border-box; }
    .p-trans { width: 891px; }
    .p-trans .ptabs { padding-left: 5px; }
    .p-time { width: 83px; }
    .p-time .ptabs { padding-left: 5px; }
    .p-sel { flex: 1; }
    .p-sel .ptabs { padding-left: 4px; }
    .tbtns { display: flex; gap: 2px; padding: 5px 0 0 5px; }
    .tbtn { width: 19px; height: 16px; display: flex; align-items: center; justify-content: center; border: 1px solid #8e8e8e; border-radius: 2px; background: linear-gradient(#bdbdbd, #a4a4a4); box-sizing: border-box; box-shadow: 1px 1px 0 #c6c6c6; }
    .tbtn svg { width: 12px; height: 12px; }
    .clock { display: flex; justify-content: center; padding-top: 15px; font-size: 14.600px; color: #3a3a3a; line-height: 20px; }
    .seltbl { display: grid; grid-template-columns: 34px 49px 49px 49px; column-gap: 4px; row-gap: 3.500px; grid-template-rows: 10px 10px 10px; padding-top: 3px; font-size: 7.600px; color: #444; }
    .seltbl .hd { text-align: left; color: #333; padding-left: 3px; }
    .seltbl .hd.e { padding-left: 2px; }
    .seltbl .lab { text-align: right; }
    .seltbl .in { background: #efefef; border: 1px solid #c8c8c8; box-sizing: border-box; display: flex; align-items: center; justify-content: center; color: #555; }
    /* levels */
    .levels { height: 55px; flex: none; display: flex; flex-direction: column; background: linear-gradient(#7a7a7a, #8e8e8e 16px, #aaa 17px); }
    .ltabs2 { height: 16px; flex: none; padding: 6px 0 0 4px; display: flex; justify-content: space-between; box-sizing: border-box; border-bottom: 1px solid #c8c8c8; }
    .ltabs2 .tab { height: 10px; }
    .ltabs2 .corner { height: 10px; }
    .meter { height: 21px; flex: none; background: #000; border-left: 1px solid #c9a237; margin-left: 1px; }
    .dbr { height: 14px; flex: none; display: flex; align-items: flex-end; padding: 0 0 2px 1px; box-sizing: border-box; font-size: 6px; color: #444; background-color: #9e9e9e; background-image: repeating-linear-gradient(90deg, #333 0 1px, transparent 1px 3.230px); background-size: 100% 4px; background-repeat: no-repeat; }
    .dbr .dbl { width: 12px; flex: none; }
    .dbr span { width: 16.150px; flex: none; text-align: center; white-space: nowrap; }
    /* status */
    .status { height: 14px; flex: none; display: flex; align-items: center; background: linear-gradient(#cfcfcf, #9f9f9f); font-size: 7.200px; color: #4a4a4a; box-sizing: border-box; white-space: nowrap; }
    .status > span { height: 14px; display: flex; align-items: center; border-right: 1px solid #8f8f8f; box-sizing: border-box; padding-left: 5px; flex: none; }
    .status > .s1 { width: 617px; padding-left: 4px; border: 0; }
    .s2 { width: 86px; }
    .s3 { width: 59px; }
    .s4 { width: 58px; }
    .s5 { width: 69px; }
    .s6 { width: 73px; }
    .s7 { width: 53px; }
    .status > .s8 { border: 0; }
    .task { height: 3px; flex: none; background: #9b9b9b; display: flex; gap: 5px; padding-left: 160px; position: relative; overflow: hidden; }
    .task b { width: 107px; height: 3px; background: #c7c7c7; border-top: 1px solid #eee; box-sizing: border-box; flex: none; }
    .task b.on { background: #1c1c1c; }
    .orb { position: absolute; left: 7px; top: 0; width: 26px; height: 26px; border-radius: 50%; background: #6a7fb0; border: 1px solid #eee; box-sizing: border-box; }
    .glow { position: absolute; left: 568px; top: 703px; width: 26px; height: 28px; border-radius: 50%; background: radial-gradient(#f7ecc6 30%, #ead9a8 60%, rgba(230, 215, 170, 0) 100%); }
    /* dialog */
    .dlg { position: absolute; left: 93px; top: 105px; width: 509px; height: 362px; box-sizing: border-box; border: 1px solid #26383f; background: #b5e0e6; display: flex; flex-direction: column; padding: 0 2px 3px; }
    .dt { height: 15px; flex: none; margin: 0 -2px; padding: 0 2px 0 3px; display: flex; align-items: center; justify-content: space-between; background: linear-gradient(#d9edf4, #a6d3e6); color: #25333c; font-size: 7.800px; }
    .close { width: 19px; height: 9px; background: linear-gradient(#e78c86, #c54a40); color: #fff; border-radius: 0 0 2px 2px; display: flex; align-items: center; justify-content: center; font-size: 8px; font-weight: 700; line-height: 8px; }
    .dbody { flex: 1; background: #efefef; display: flex; gap: 12px; padding: 9px 0 0 2px; box-sizing: border-box; min-height: 0; }
    .dl { width: 336px; display: flex; flex-direction: column; flex: none; }
    .dr { width: 149px; display: flex; flex-direction: column; flex: none; }
    .drow { height: 14px; flex: none; display: flex; align-items: center; padding-left: 4px; color: #333; }
    .drow + .drow { margin-top: 6px; }
    .combo { height: 14px; box-sizing: border-box; border: 1px solid #8d8d8d; border-radius: 2px; background: linear-gradient(#f3f3f3, #d9d9d9); display: flex; align-items: center; justify-content: space-between; padding-left: 2px; color: #333; }
    .combo i { border-left: 0; background: none; width: 12px; }
    .c-set { width: 307px; margin-left: 7px; }
    .c-cat { width: 124px; margin: 0 9px 0 7px; }
    .btn { height: 13px; box-sizing: border-box; border: 1px solid #8a8a8a; border-radius: 2px; background: linear-gradient(#f8f8f8, #d9d9d9); display: flex; align-items: center; justify-content: center; color: #333; flex: none; }
    .btn.blue { background: linear-gradient(#dff1f9, #a8d8ee); border-color: #4d7f95; }
    .b48 { width: 48px; margin-right: 9px; }
    .b48.last { margin: 0 0 0 -1px; }
    .table { height: 268px; flex: none; margin-top: 6px; background: #fff; border: 1px solid #9a9a9a; border-bottom-color: #777; box-sizing: border-box; display: flex; }
    .tlist { flex: 1; overflow: hidden; min-width: 0; }
    .thead { height: 17px; display: flex; align-items: center; border-bottom: 1px solid #f4f4f4; box-sizing: border-box; padding-top: 1px; color: #444; }
    .trow { height: 11.950px; line-height: 8px; display: flex; align-items: center; color: #3a4050; white-space: nowrap; }
    .trow.hl { background: #f1f1f1; margin: 0 4px 0 1px; }
    .trow.hl .c1 { padding-left: 4px; width: 175px; }
    .c1 { width: 176px; padding-left: 5px; box-sizing: border-box; flex: none; }
    .c2 { width: 85px; flex: none; }
    .vs { width: 12px; flex: none; background: #f6f6f6; display: flex; flex-direction: column; align-items: center; justify-content: space-between; padding: 4px 0; box-sizing: border-box; position: relative; }
    .tup, .tdn { width: 0; height: 0; border-left: 2.500px solid transparent; border-right: 2.500px solid transparent; }
    .tup { border-bottom: 3px solid #444; }
    .tdn { border-top: 3px solid #444; }
    .vthumb { position: absolute; left: 1px; top: 12px; width: 10px; height: 75px; background: linear-gradient(90deg, #e9e9e9, #cfcfcf); border: 1px solid #aaa; border-radius: 1px; box-sizing: border-box; display: flex; align-items: center; justify-content: center; }
    .vthumb::after { content: ""; width: 4px; height: 4px; border-top: 1px solid #777; border-bottom: 1px solid #777; }
    .dstat { margin-top: 7px; height: 15px; border-top: 1px solid #c8c8c8; flex: none; border-right: 1px solid #e2e2e2; }
    .dtop { display: flex; justify-content: space-between; flex: none; padding-right: 1px; }
    .b66 { width: 66px; }
    fieldset { margin: 0; padding: 0 8px 7px 7px; border: 1px solid #dfdfdf; min-width: 0; box-sizing: border-box; }
    legend { padding: 0 2px; margin-left: -4px; height: 10px; line-height: 10px; color: #444; font-size: 7.450px; }
    .f1 { margin-top: 22px; }
    .f2 { margin-top: 9px; }
    .ftxt { line-height: 10px; margin-top: 5px; color: #444; }
    .ftxt2 { line-height: 9px; margin-top: 4px; color: #444; }
    .irow { display: flex; justify-content: space-between; align-items: center; padding-right: 1px; }
    .f1 .irow { margin-top: 1px; }
    .f2 .irow { margin-top: 2.500px; }
    .inp { width: 98px; height: 14px; background: #fff; display: flex; align-items: center; padding-left: 3px; box-sizing: border-box; color: #333; }
    .clr { width: 27px; }
    .crow { display: flex; align-items: center; margin-top: 4px; height: 14px; color: #444; }
    .crow .c-ch { width: 51px; margin-left: 7px; }
    .crow .c-mi { width: 97px; margin-left: 6px; color: #aaa; background: linear-gradient(#e6e6e6, #dcdcdc); border-color: #bbb; }
    .crow .c-mi i::after { border-top-color: #999; }
    .crow .pl { margin-left: 1px; }
    .crow .pl2 { margin-left: 3px; }
    .conf { margin-top: 6px; line-height: 10px; padding: 0 0 2px 3px; border-bottom: 1px solid #c9c9c9; color: #444; }
    .cbox { height: 71px; flex: none; display: flex; flex-direction: column; align-items: flex-end; justify-content: space-between; padding: 5px 5px 6px 0; box-sizing: border-box; }
    .okcol { display: flex; flex-direction: column; align-items: flex-end; margin-top: 7px; padding-right: 1px; }
    .okcol .btn { width: 40px; height: 14.500px; margin-bottom: 2.500px; }
    .ok { outline: 1px dashed #234; outline-offset: -2px; border-color: #2c6f8f !important; }
    .cursor { position: absolute; left: 481px; top: 315px; width: 10px; height: 15px; }
  `;

  render() {
    return html`<div class="win">
      <div class="title">
        <div class="t-line">
          <svg viewBox="0 0 8 8"><path d="M4 0l1 3 3 1-3 1-1 3-1-3-3-1 3-1z" fill="#4c7a3f"/></svg>
          <span>Untitled* - Adobe Audition</span>
          <div class="ctrls"><b>–</b><b>❐</b><b>✕</b></div>
        </div>
        <div class="menu">
          ${["File", "Edit", "View", "Effects", "Generate", "Favorites", "Options", "Window", "Help"].map((m) => html`<span>${m}</span>`)}
        </div>
      </div>
      <div class="tb tb1">
        <div class="tools">${R1.map(ico)}</div>
        <div class="modes">
          ${ico("wave!")}<span class="lbl">Edit</span>
          ${ico("mt")}<span class="lbl">Multitrack</span>
          ${ico("cd")}<span class="lbl">CD</span>
        </div>
        <div class="ws">Workspace: <div class="wscombo">Edit View (Default)<i></i></div></div>
      </div>
      <div class="tb tb2">${R2.map(ico)}</div>
      <div class="tb tb3">${R3.map(ico)}</div>
      <div class="band"></div>

      <div class="panels">
        <div class="left">
          <div class="tabs ltabs">
            <div class="tab t-files">Files <b>×</b></div>
            <div class="tab off t-eff">Effects</div>
            <div class="tab off t-fav">Favo ${menuBtn}</div>
          </div>
          <div class="lbody">
            <div class="ltool">
              ${["ldoc", "lx", "lins", "lcal", "lclk"].map(ico)}
            </div>
            <div class="list">
              ${["1-Scott ScooterFort", "DRUM LOOP Med", "FlowingStream-SF-", "SF-GUITAR-PICK0"].map((f) => html`<div class="file">${fileIco}<span>${f}</span></div>`)}
              <div class="file cur">${fileIco}<span>Untitled *</span></div>
            </div>
            <div class="hscroll"><i class="tri-l"></i><div class="hthumb"></div><i class="tri-r"></i></div>
            <div class="lrow">
              ${ico("hsym!")}${ico("ret")}<i class="tri-r"></i>${ico("tbl2")}${ico("clock")}<u>1.0</u>
            </div>
            <div class="sort">Sort By: <div class="sortc">Filename<i></i></div></div>
            <div class="lfoot">
              ${bottomIcons.map((b) => html`<span class="ic framed"><svg viewBox="0 0 16 16">${b}</svg></span>`)}
              ${ico("yeq")}${ico("bar")}
            </div>
          </div>
        </div>

        <div class="main">
          <div class="mtabs">
            <div class="tab t-main">Main</div>
            <div class="corner">${menuBtn}</div>
          </div>
          <div class="mbody">
            <div class="overview"></div>
            <div class="wrow">
              <svg class="wave" viewBox="0 0 996 440">
                <path d=${hgrid} stroke="#1b2a1b" stroke-width="1"/>
                <path d=${gridPath} stroke="#15331a" stroke-width="1"/>
                <path d="M0 22H996" stroke="#6c6c52" stroke-width="1"/>
                <path d="M0 415.500H996" stroke="#e6e6e6" stroke-width="1.200"/>
                <path d="M0 219.500H996" stroke="#7d9a86" stroke-width="1"/>
                <path d="M35.500 0V438" stroke="#c98f2e" stroke-width="1" stroke-dasharray="1 3"/>
                <path d=${wavePath} stroke="#5cf592" stroke-width="1" shape-rendering="crispEdges"/>
                <path d=${darkPath} stroke="#0f7a40" stroke-width="1" shape-rendering="crispEdges"/>
                <path d=${lightPath} stroke="#bcd6c4" stroke-width="1" shape-rendering="crispEdges"/>
              </svg>
              <div class="scale">
                <div class="norm">norm</div>
                ${SCALE.map((s) => html`<span>${s}</span>`)}
              </div>
            </div>
            <div class="tl">
              <div class="h0">hms</div>
              ${TIME_LABELS.map((t) => html`<div class="c">${t}</div>`)}
              <div class="h1">hms</div>
            </div>
            <div class="marker"></div>
          </div>
        </div>
      </div>

      <div class="bottom">
        <div class="pane p-trans">
          <div class="ptabs"><div class="tab">Transport <b>×</b></div><div class="corner">${menuBtn}</div></div>
          <div class="pbody"><div class="tbtns">
            ${tIcons.map((t) => html`<div class="tbtn"><svg viewBox="0 0 16 16">${t}</svg></div>`)}
          </div></div>
        </div>
        <div class="pane p-time">
          <div class="ptabs"><div class="tab">Time <b>×</b></div><div class="corner">${menuBtn}</div></div>
          <div class="pbody"><div class="clock">0:00.271</div></div>
        </div>
        <div class="pane p-sel">
          <div class="ptabs"><div class="tab">Selection/View <b>×</b></div><div class="corner">${menuBtn}</div></div>
          <div class="pbody"><div class="seltbl">
            <span></span><span class="hd">Begin</span><span class="hd e">End</span><span class="hd">Length</span>
            <span class="lab">Selection</span><span class="in">0:00.271</span><span class="in"></span><span class="in">0:00.000</span>
            <span class="lab">View</span><span class="in">0:00.000</span><span class="in">0:07.529</span><span class="in">0:07.529</span>
          </div></div>
        </div>
      </div>

      <div class="levels">
        <div class="ltabs2"><div class="tab">Levels <b>×</b></div><div class="corner">${menuBtn}</div></div>
        <div class="meter"></div>
        <div class="dbr"><div class="dbl">dB</div>${DB.map((d) => html`<span>${d}</span>`)}</div>
      </div>

      <div class="status">
        <span class="s1">Stopped</span>
        <span class="s2">-31.7dB @ &nbsp;0:00.273</span>
        <span class="s2">44100 • 16-bit • Mono</span>
        <span class="s3">648 K</span>
        <span class="s4">0:07.529</span>
        <span class="s5">344.66 GB free</span>
        <span class="s6">1165:31:41.95 free</span>
        <span class="s7"></span>
        <span class="s8">Waveform</span>
      </div>
      <div class="task"><div class="orb"></div><b class="on"></b><b></b><b></b><b></b><b></b></div>
      <div class="glow"></div>

      <div class="dlg">
        <div class="dt"><span>Keyboard Shortcuts and MIDI Triggers</span><div class="close">×</div></div>
        <div class="dbody">
          <div class="dl">
            <div class="drow">Set:<div class="combo c-set">[Custom]<i></i></div></div>
            <div class="drow">Category:<div class="combo c-cat">Effects<i></i></div>
              <div class="btn blue b48">Multitrack</div><div class="btn blue b48">Edit View</div><div class="btn blue b48 last">CD View</div></div>
            <div class="table">
              <div class="tlist">
                <div class="thead"><div class="c1">Command Name</div><div class="c2">Shortcut</div><div>MIDI Trigger</div></div>
                ${COMMANDS.map((c) => html`<div class="trow ${c[0].startsWith("Apply Reverse") ? "hl" : ""}"><div class="c1">${c[0]}</div><div class="c2">${c[1]}</div></div>`)}
              </div>
              <div class="vs"><i class="tup"></i><div class="vthumb"></div><i class="tdn"></i></div>
            </div>
            <div class="dstat"></div>
          </div>
          <div class="dr">
            <div class="dtop"><div class="btn b66">Save As...</div><div class="btn b66">Delete</div></div>
            <fieldset class="f1">
              <legend>Shortcut Key</legend>
              <div class="ftxt">Press new shortcut key:</div>
              <div class="irow"><div class="inp">R</div><div class="btn clr">Clear</div></div>
            </fieldset>
            <fieldset class="f2">
              <legend>MIDI Trigger</legend>
              <div class="ftxt2">Press new MIDI note or<br />adjust new controller/value:</div>
              <div class="irow"><div class="inp"></div><div class="btn clr">Clear</div></div>
              <div class="crow"><span class="pl">Channel:</span><div class="combo c-ch">1<i></i></div></div>
              <div class="crow"><span class="pl2">MIDI In:</span><div class="combo c-mi">None<i></i></div></div>
            </fieldset>
            <div class="conf">Conflicting Keys:</div>
            <div class="cbox"><i class="tup"></i><i class="tdn"></i></div>
            <div class="okcol">
              <div class="btn blue ok">OK</div>
              <div class="btn blue">Cancel</div>
              <div class="btn">Help</div>
            </div>
          </div>
        </div>
        <svg class="cursor" viewBox="0 0 10 15"><path d="M1 1v11l3-2.500 2 4.500 2-1-2-4.500h3.500z" fill="#fff" stroke="#111" stroke-width="0.800"/></svg>
      </div>
    </div>`;
  }
}
